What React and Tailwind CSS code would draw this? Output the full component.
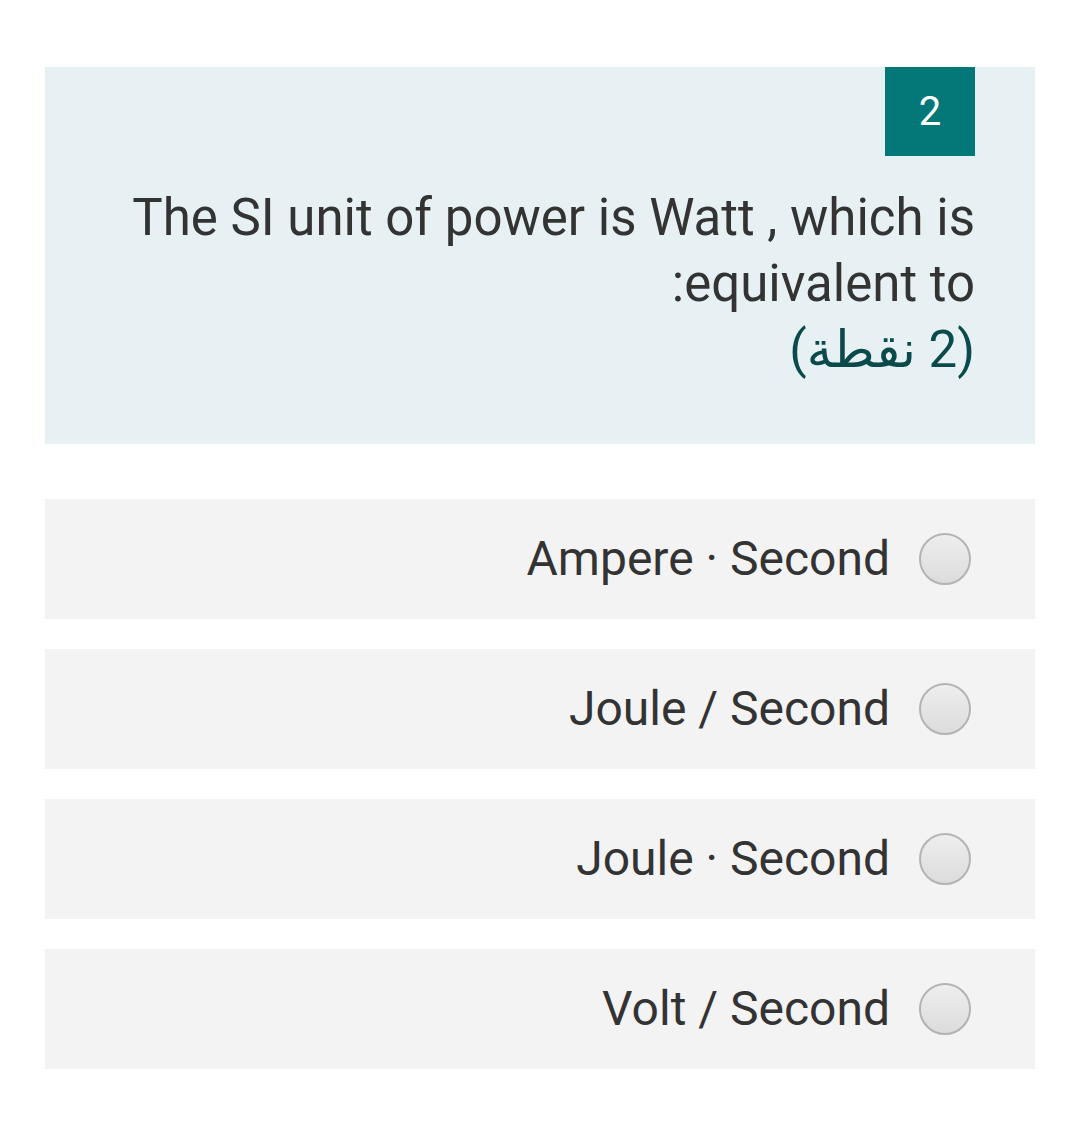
import React from 'react';

const options = ['Ampere · Second', 'Joule / Second', 'Joule · Second', 'Volt / Second'];

const Radio = () => (
    <span className="block w-[52px] h-[52px] shrink-0 rounded-full border-2 border-[#b4b4b4] bg-gradient-to-b from-[#eeeeee] to-[#dcdcdc]" />
);

const App = () => {
    return (
        <div className="w-[1080px] h-[1142px] bg-white pt-[67px] px-[45px]" style={{ fontFamily: 'Roboto, "Noto Sans", "DejaVu Sans", sans-serif' }}>
            <div className="bg-[#e7f0f3] pr-[60px] pb-[61px]">
                <div className="flex justify-end">
                    <div className="w-[90px] h-[89px] bg-[#047878] text-white text-[40px] flex items-center justify-center">2</div>
                </div>
                <div dir="rtl" className="mt-[29px] text-[51px] leading-[66px] text-[#333333] text-right pl-[40px]">
                    <p>The SI unit of power is Watt , which is :equivalent to</p>
                    <p className="text-[#0b4a4a]">(2 نقطة)</p>
                </div>
            </div>
            <div className="mt-[55px] flex flex-col gap-[30px]">
                {options.map((opt) => (
                    <label key={opt} dir="rtl" className="h-[120px] bg-[#f3f3f3] flex items-center gap-[29px] pr-[64px]">
                        <Radio />
                        <span dir="ltr" className="text-[48px] text-[#333333]">{opt}</span>
                    </label>
                ))}
            </div>
        </div>
    );
};

export default App;
